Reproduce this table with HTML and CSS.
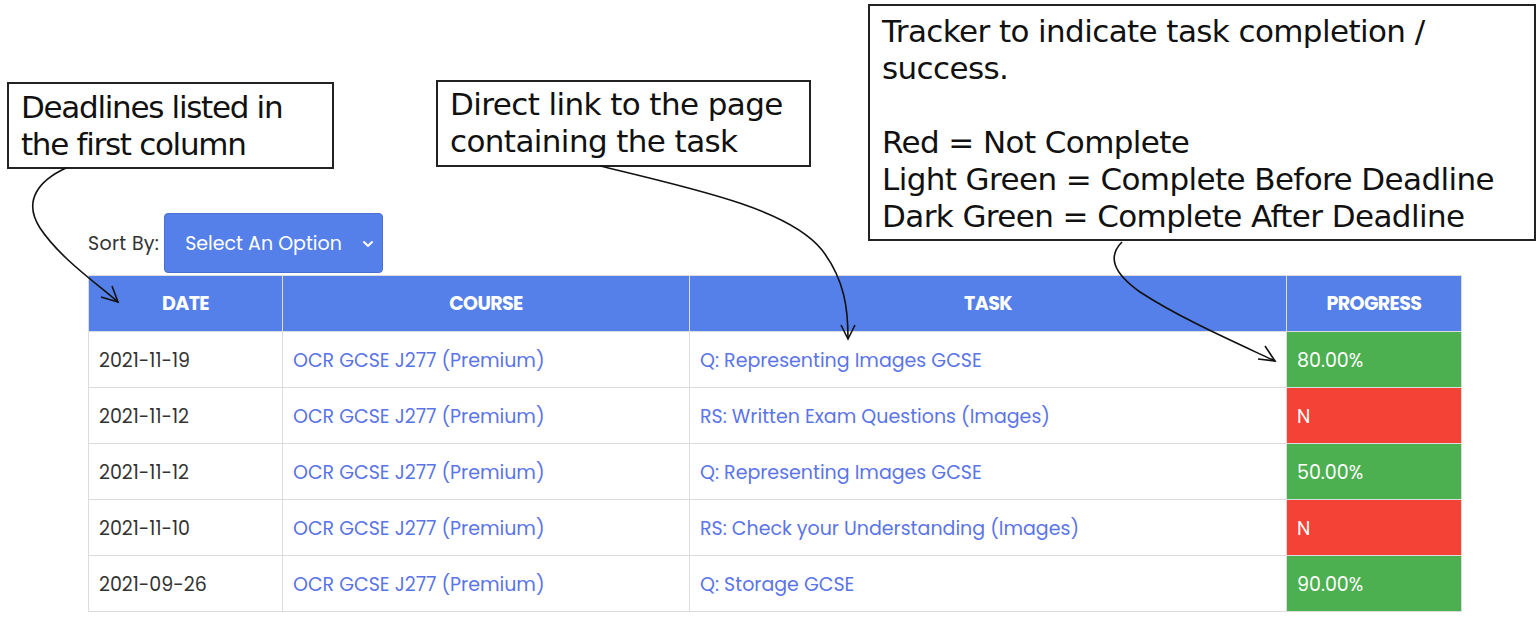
FILE: index.html
```html
<!DOCTYPE html>
<html>
<head>
<meta charset="utf-8">
<link rel="stylesheet" href="styles.css">
</head>
<body>
<div class="page">
  <main class="content">
    <div class="controls">
      <label class="sort-label">Sort By:</label>
      <div class="select">
        <span>Select An Option</span>
        <svg class="chev" width="12" height="8" viewBox="0 0 12 8"><path d="M2 2l4 4 4-4" fill="none" stroke="#fff" stroke-width="2" stroke-linecap="round" stroke-linejoin="round"/></svg>
      </div>
    </div>
    <table class="grid">
      <colgroup>
        <col class="c-date"><col class="c-course"><col class="c-task"><col class="c-prog">
      </colgroup>
      <thead>
        <tr><th>DATE</th><th>COURSE</th><th>TASK</th><th>PROGRESS</th></tr>
      </thead>
      <tbody>
        <tr><td>2021-11-19</td><td><a>OCR GCSE J277 (Premium)</a></td><td><a>Q: Representing Images GCSE</a></td><td class="ok">80.00%</td></tr>
        <tr><td>2021-11-12</td><td><a>OCR GCSE J277 (Premium)</a></td><td><a>RS: Written Exam Questions (Images)</a></td><td class="no">N</td></tr>
        <tr><td>2021-11-12</td><td><a>OCR GCSE J277 (Premium)</a></td><td><a>Q: Representing Images GCSE</a></td><td class="ok">50.00%</td></tr>
        <tr><td>2021-11-10</td><td><a>OCR GCSE J277 (Premium)</a></td><td><a>RS: Check your Understanding (Images)</a></td><td class="no">N</td></tr>
        <tr><td>2021-09-26</td><td><a>OCR GCSE J277 (Premium)</a></td><td><a>Q: Storage GCSE</a></td><td class="ok">90.00%</td></tr>
      </tbody>
    </table>
  </main>

  <div class="note note-1">Deadlines listed in<br>the first column</div>
  <div class="note note-2">Direct link to the page<br>containing the task</div>
  <div class="note note-3">Tracker to indicate task completion /<br>success.<br><br>Red = Not Complete<br>Light Green = Complete Before Deadline<br>Dark Green = Complete After Deadline</div>

  <svg class="arrows" width="1536" height="618" viewBox="0 0 1536 618">
    <g fill="none" stroke="#111" stroke-width="1.6">
      <path d="M66 168 C 40 180, 22 200, 40 228 C 60 258, 95 282, 118 302"/>
      <path d="M101 297 L118 302 L112 286"/>
      <path d="M600 166 C 700 190, 790 210, 822 250 C 845 280, 848 310, 848 338"/>
      <path d="M841 325 L848 339 L855 325"/>
      <path d="M1122 242 C 1108 256, 1112 272, 1140 292 C 1180 318, 1230 340, 1275 361"/>
      <path d="M1258 359 L1275 361 L1265 346"/>
    </g>
  </svg>
</div>
</body>
</html>
```
FILE: styles.css
```css
html, body {
  margin: 0;
  padding: 0;
  background: #fff;
}
.page {
  position: relative;
  width: 1536px;
  height: 618px;
  overflow: hidden;
  font-family: "Poppins", "Inter", "Noto Sans", sans-serif;
}
.content {
  padding: 213px 0 0 88px;
}
.controls {
  display: flex;
  align-items: center;
  gap: 5px;
  height: 60px;
}
.sort-label {
  font-size: 19px;
  color: #333;
  letter-spacing: 0.3px;
}
.select {
  box-sizing: border-box;
  width: 219px;
  height: 60px;
  background: #5580ea;
  border: 1px solid #4a6fd0;
  border-radius: 4px;
  color: #fff;
  font-size: 19px;
  display: flex;
  align-items: center;
  justify-content: space-between;
  padding: 0 8px 0 20px;
}
.chev { margin-top: 1px; }
.grid {
  margin-top: 2px;
  border-collapse: collapse;
  table-layout: fixed;
  width: 1373px;
  font-size: 19px;
}
.c-date { width: 194px; }
.c-course { width: 407px; }
.c-task { width: 597px; }
.c-prog { width: 175px; }
.grid th, .grid td {
  border: 1.5px solid #dcdcdc;
  height: 56px;
  box-sizing: border-box;
  padding: 0 10px;
}
.grid th {
  background: #5580ea;
  color: #fff;
  font-weight: 700;
  text-align: center;
  letter-spacing: -0.6px;
}
.grid td {
  color: #333;
  text-align: left;
  padding-top: 2px;
}
.grid a {
  color: #5b74e6;
}
.grid td.ok { background: #4caf50; color: #fff; }
.grid td.no { background: #f44336; color: #fff; }

.note {
  position: absolute;
  box-sizing: border-box;
  background: #fff;
  border: 2px solid #222;
  font-family: "Century Gothic", "URW Gothic", "DejaVu Sans", sans-serif;
  font-size: 31px;
  line-height: 37px;
  color: #111;
  letter-spacing: -0.6px;
  padding: 8px 12px;
}
.note-1 { left: 7px; top: 82px; width: 327px; height: 87px; letter-spacing: -1.3px; padding-top: 5px; }
.note-2 { left: 436px; top: 80px; width: 375px; height: 87px; padding-top: 4px; }
.note-3 { left: 868px; top: 4px; width: 668px; height: 237px; padding-top: 7px; }
.arrows {
  position: absolute;
  left: 0;
  top: 0;
  pointer-events: none;
}
```
